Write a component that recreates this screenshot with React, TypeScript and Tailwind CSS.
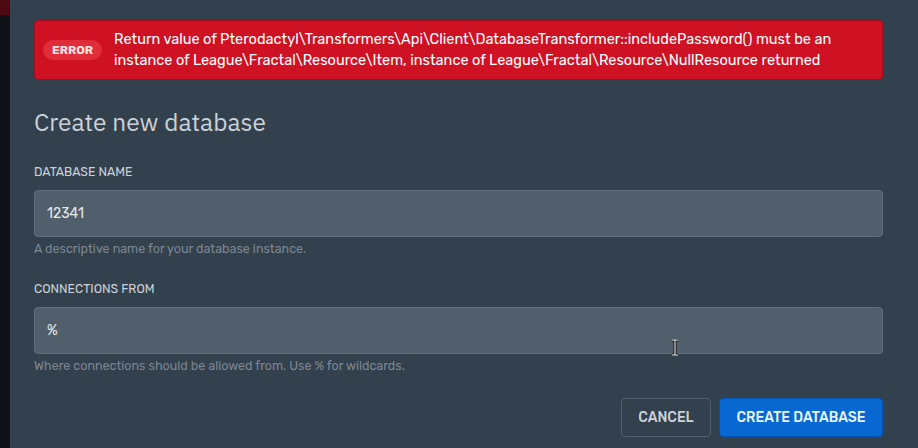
export default function App() {
  return (
    <div className="flex h-[448px] w-[918px] overflow-hidden bg-[#33404d] font-['Rubik','Noto_Sans',sans-serif]">
      {/* dark backdrop strip on the left */}
      <div className="flex w-[10px] shrink-0 flex-col bg-[#0f1216]">
        <div className="h-[15px] bg-[#4b0a12]" />
      </div>

      <div className="relative flex-1 pl-[24px] pr-[35px] pt-[20px]">
        {/* Error alert */}
        <div className="flex h-[60px] items-center rounded border border-[#a50c1f] bg-[#cf1124] pl-[8px] pr-4">
          <span className="mr-[12px] shrink-0 rounded-full bg-[#e12d39] px-[9px] py-[3px] text-[12px] font-bold leading-[14px] text-[#ffe3e3]">
            ERROR
          </span>
          <p className="text-[14.5px] leading-[21px] text-white">
            Return value of Pterodactyl\Transformers\Api\Client\DatabaseTransformer::includePassword() must be an instance of League\Fractal\Resource\Item, instance of League\Fractal\Resource\NullResource returned
          </p>
        </div>

        <h2 className="mt-[26px] text-[24.5px] leading-[32px] text-[#cad1d8] font-['IBM_Plex_Sans','Noto_Sans',sans-serif]">
          Create new database
        </h2>

        <div className="mt-[26px]">
          <label className="block text-[12.3px] uppercase leading-[16px] text-[#cad1d8]">
            Database Name
          </label>
          <div className="mt-[10px] flex h-[47px] items-center rounded border border-[#606d7b] bg-[#515f6c] px-[12px] text-[14px] text-[#e5e8eb]">
            12341
          </div>
          <p className="mt-[4px] text-[12.5px] leading-[16px] text-[#7b8793]">
            A descriptive name for your database instance.
          </p>
        </div>

        <div className="mt-[24px]">
          <label className="block text-[12.3px] uppercase leading-[16px] text-[#cad1d8]">
            Connections From
          </label>
          <div className="mt-[10px] flex h-[47px] items-center rounded border border-[#606d7b] bg-[#515f6c] px-[12px] text-[14px] text-[#e5e8eb]">
            %
          </div>
          <p className="mt-[4px] text-[12.5px] leading-[16px] text-[#7b8793]">
            Where connections should be allowed from. Use % for wildcards.
          </p>
        </div>

        <div className="mt-[24px] flex justify-end gap-[8px]">
          <button className="h-[39px] w-[90px] rounded border border-[#515f6c] text-[14px] font-medium uppercase text-[#cad1d8]">
            Cancel
          </button>
          <button className="h-[39px] w-[164px] rounded border border-[#0552b5] bg-[#0967d2] text-[14px] font-medium uppercase text-[#e6f6ff]">
            Create Database
          </button>
        </div>

        {/* mouse I-beam cursor */}
        <svg className="absolute left-[660px] top-[339px]" width="10" height="17" viewBox="0 0 10 17">
          <path d="M2 1h6M5 1v15M2 16h6" stroke="#111" strokeWidth="3" />
          <path d="M2 1h6M5 1v15M2 16h6" stroke="#fff" strokeWidth="1" />
        </svg>
      </div>
    </div>
  )
}
